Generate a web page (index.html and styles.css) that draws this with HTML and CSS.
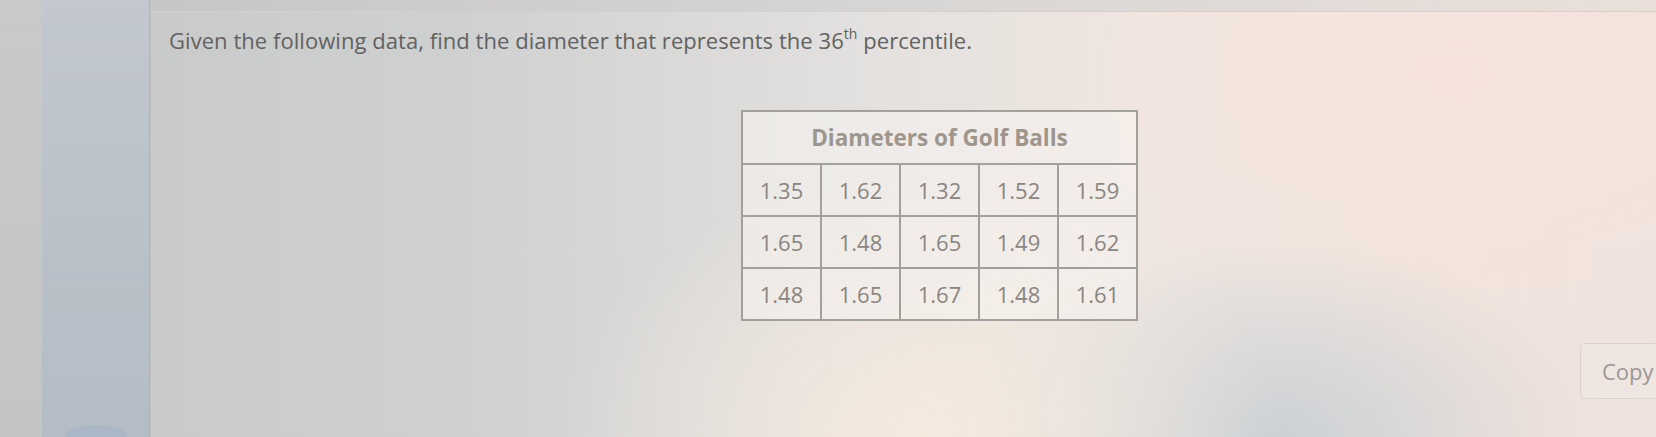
FILE: index.html
```html
<!DOCTYPE html>
<html lang="en">
<head>
<meta charset="utf-8">
<title>Percentile question</title>
<link rel="stylesheet" href="styles.css">
</head>
<body>
<div class="screen">
  <div class="rail-grey"></div>
  <div class="rail-blue"><div class="rail-dot"></div></div>
  <div class="main">
    <div class="panel">
      <p class="question">Given the following data, find the diameter that represents the 36<sup>th</sup> percentile.</p>
      <div class="table-wrap">
        <table class="data">
          <thead>
            <tr><th colspan="5">Diameters of Golf Balls</th></tr>
          </thead>
          <tbody>
            <tr><td>1.35</td><td>1.62</td><td>1.32</td><td>1.52</td><td>1.59</td></tr>
            <tr><td>1.65</td><td>1.48</td><td>1.65</td><td>1.49</td><td>1.62</td></tr>
            <tr><td>1.48</td><td>1.65</td><td>1.67</td><td>1.48</td><td>1.61</td></tr>
          </tbody>
        </table>
      </div>
      <div class="actions">
        <button class="copy-btn" type="button">Copy</button>
      </div>
    </div>
  </div>
</div>
</body>
</html>
```

FILE: styles.css
```css
html, body {
  margin: 0;
  padding: 0;
}
body {
  width: 1656px;
  height: 437px;
  overflow: hidden;
  background: #c9c9c9;
  font-family: "Open Sans", "Noto Sans", sans-serif;
}
.screen {
  display: flex;
  height: 437px;
}
.rail-grey {
  width: 42px;
  flex: none;
  background: linear-gradient(180deg, #c9c9ca 0%, #c3c4c4 100%);
}
.rail-blue {
  width: 108px;
  flex: none;
  display: flex;
  flex-direction: column;
  justify-content: flex-end;
  align-items: center;
  background: linear-gradient(180deg, #c3c8d0 0%, #b9c0c8 60%, #b4bcc6 100%);
  box-shadow: inset -1px 0 0 #aeb4bb;
}
.rail-dot {
  width: 62px;
  height: 12px;
  border-radius: 50% 50% 0 0 / 100% 100% 0 0;
  background: #a9b7c6;
}
.main {
  flex: 1;
  padding-top: 11px;
  background: linear-gradient(90deg, #c6c6c6 0%, #d8d6d4 50%, #ebe0da 100%);
}
.panel {
  height: 100%;
  box-sizing: border-box;
  border-top: 1px solid #d4d0cd;
  border-left: 1px solid #c0c0c0;
  padding: 13px 0 0 18px;
  background:
    radial-gradient(ellipse 360px 260px at 770px 420px, rgba(246, 234, 222, 0.95), rgba(246, 234, 222, 0) 100%),
    radial-gradient(ellipse 320px 200px at 1120px 430px, rgba(198, 206, 212, 0.9), rgba(198, 206, 212, 0) 100%),
    radial-gradient(ellipse 500px 260px at 1300px 60px, rgba(246, 228, 220, 0.9), rgba(246, 228, 220, 0) 100%),
    linear-gradient(90deg, #c9cbcb 0%, #cfd0d0 20%, #e2e0de 45%, #eee6e1 65%, #f1e3dc 85%, #efe2dd 100%);
}
.question {
  margin: 0;
  font-size: 22px;
  line-height: 30px;
  color: #626262;
  letter-spacing: 0.05px;
}
.question sup {
  font-size: 14px;
  line-height: 0;
  vertical-align: 10px;
}
.table-wrap {
  padding: 55px 0 0 572px;
}
.data {
  border-collapse: collapse;
  background: rgba(248, 244, 240, 0.55);
  color: #8a8580;
}
.data th {
  height: 51px;
  padding: 0;
  border: 2px solid #a4a19d;
  font-size: 22.5px;
  font-weight: 700;
  color: #9e968c;
  text-align: center;
  vertical-align: middle;
}
.data td {
  width: 77px;
  height: 50px;
  padding: 0;
  border: 2px solid #a3a09c;
  font-size: 22px;
  text-align: center;
  vertical-align: middle;
}
.actions {
  padding: 22px 0 0 1411px;
}
.copy-btn {
  width: 110px;
  height: 56px;
  box-sizing: border-box;
  border: 1px solid #d9d3cf;
  border-radius: 4px;
  background: rgba(238, 232, 228, 0.6);
  font-family: "Open Sans", "Noto Sans", sans-serif;
  font-size: 22px;
  color: #9b9895;
  text-align: left;
  padding: 0 0 0 21px;
}
```
